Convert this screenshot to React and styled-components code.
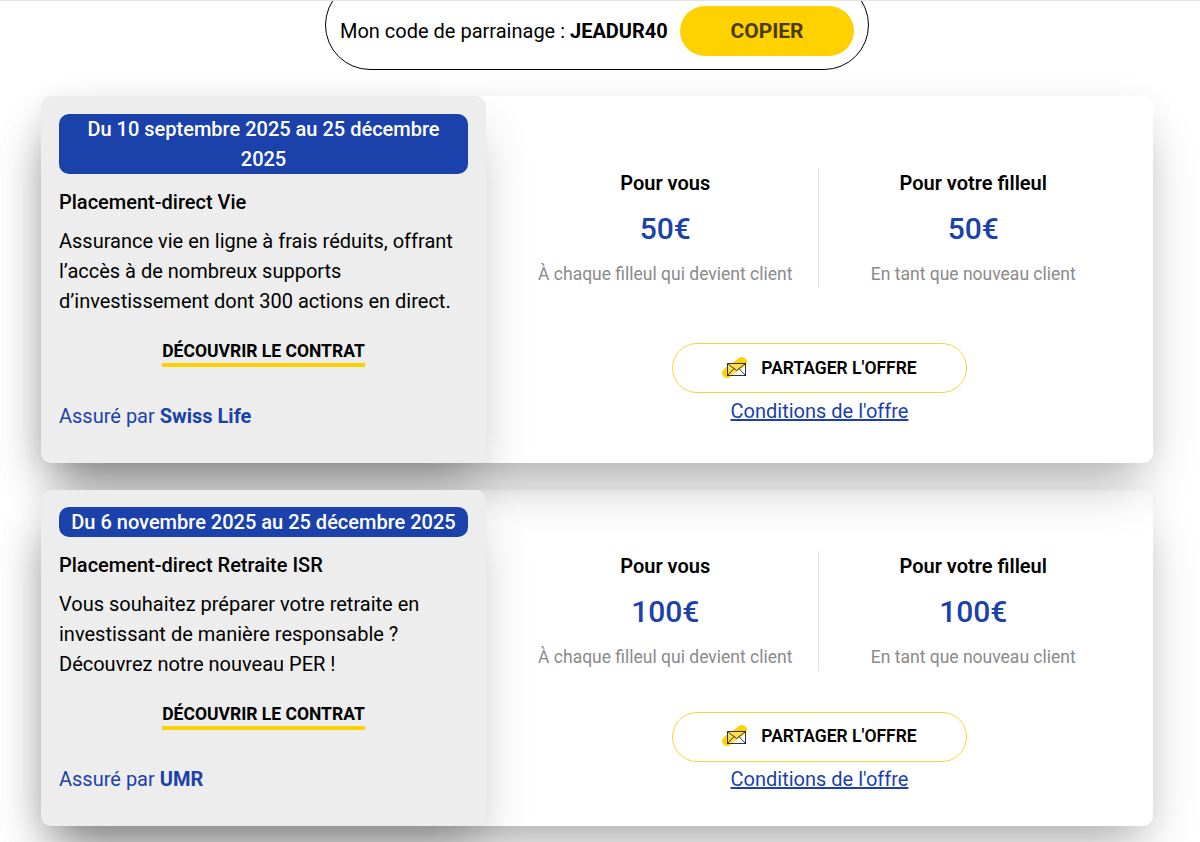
import React from 'react'
import styled, { createGlobalStyle } from 'styled-components'

const GlobalStyle = createGlobalStyle`
  html, body { margin: 0; padding: 0; background: #fff; }
  body { font-family: Roboto, "Liberation Sans", sans-serif; color: #000; overflow: hidden; }
`

const offers = [
  {
    dates: 'Du 10 septembre 2025 au 25 décembre 2025',
    name: 'Placement-direct Vie',
    text: 'Assurance vie en ligne à frais réduits, offrant l’accès à de nombreux supports d’investissement dont 300 actions en direct.',
    insurer: 'Swiss Life',
    amount: '50€',
    pad: 18,
    top: 72,
    gap: 55,
    lift: 0,
  },
  {
    dates: 'Du 6 novembre 2025 au 25 décembre 2025',
    name: 'Placement-direct Retraite ISR',
    text: 'Vous souhaitez préparer votre retraite en investissant de manière responsable ? Découvrez notre nouveau PER !',
    insurer: 'UMR',
    amount: '100€',
    pad: 17,
    top: 60.5,
    gap: 41.5,
    lift: 1,
  },
]

function MailIcon() {
  return (
    <svg width="30" height="28" viewBox="0 0 30 28">
      <path d="M5 19 L20 8" stroke="#ffd100" strokeWidth="10" strokeLinecap="round" />
      <rect x="5.5" y="9.5" width="18" height="12" fill="#fff" fillOpacity="0.3" stroke="#333" />
      <path d="M6 10 L14.5 16.5 L23 10 M6 21 L12 14.5 M23 21 L17 14.5" fill="none" stroke="#333" />
    </svg>
  )
}

function App() {
  return (
    <>
      <GlobalStyle />
      <Page>
        <CodeBar>
          <CodeLabel>Mon code de parrainage : <strong>JEADUR40</strong></CodeLabel>
          <CopyButton>COPIER</CopyButton>
        </CodeBar>
        <Offers>
          {offers.map((offer) => (
            <Card key={offer.name}>
              <Contract $pad={offer.pad}>
                <Dates>{offer.dates}</Dates>
                <ContractName>{offer.name}</ContractName>
                <ContractText>{offer.text}</ContractText>
                <ContractLinkRow>
                  <ContractLink>DÉCOUVRIR LE CONTRAT</ContractLink>
                </ContractLinkRow>
                <Insurer>Assuré par <strong>{offer.insurer}</strong></Insurer>
              </Contract>
              <Rewards $top={offer.top}>
                <Stats>
                  <Stat>
                    <StatTitle>Pour vous</StatTitle>
                    <Amount>{offer.amount}</Amount>
                    <StatText>À chaque filleul qui devient client</StatText>
                  </Stat>
                  <Stat>
                    <StatTitle>Pour votre filleul</StatTitle>
                    <Amount>{offer.amount}</Amount>
                    <StatText>En tant que nouveau client</StatText>
                  </Stat>
                </Stats>
                <ShareButton $gap={offer.gap} $lift={offer.lift}>
                  <MailIcon />
                  PARTAGER L'OFFRE
                </ShareButton>
                <Conditions $lift={offer.lift}>Conditions de l'offre</Conditions>
              </Rewards>
            </Card>
          ))}
        </Offers>
      </Page>
    </>
  )
}

export default App

const Page = styled.div`
  height: 842px;
  overflow: hidden;
  border-top: 1px solid #e4e4e4;
  box-sizing: border-box;
`
const CodeBar = styled.div`
  box-sizing: border-box;
  width: 544px;
  height: 90px;
  margin: -21px 0 0 325px;
  padding: 0 14px 13px 14px;
  display: flex;
  align-items: flex-end;
  justify-content: space-between;
  border: 1px solid #000;
  border-radius: 50px;
  background: #fff;
`
const CodeLabel = styled.div`
  font-size: 20px;
  line-height: 50px;
  strong { font-weight: 700; }
`
const CopyButton = styled.button`
  width: 174px;
  height: 50px;
  border: none;
  border-radius: 25px;
  background: #ffd100;
  color: #4a3b00;
  font-family: inherit;
  font-size: 21px;
  font-weight: 700;
`
const Offers = styled.div`
  margin: 26px 47px 0 41px;
  display: flex;
  flex-direction: column;
  gap: 27px;
`
const Card = styled.section`
  display: flex;
  border-radius: 10px;
  box-shadow: 0 28px 50px -12px rgba(0, 0, 0, 0.32), 0 0 30px rgba(0, 0, 0, 0.04);
`
const Contract = styled.div`
  position: relative;
  box-sizing: border-box;
  width: 445px;
  flex-shrink: 0;
  padding: ${(p) => p.$pad}px 18px 32px;
  background: #ededed;
  border-radius: 10px;
  box-shadow: 0 28px 50px -12px rgba(0, 0, 0, 0.3);
`
const Dates = styled.div`
  padding: 0 10px;
  background: #1b41ab;
  border-radius: 10px;
  color: #fff;
  font-size: 20px;
  font-weight: 500;
  line-height: 30px;
  text-align: center;
`
const ContractName = styled.h3`
  margin: 13px 0 0;
  font-size: 20px;
  font-weight: 500;
  line-height: 30px;
`
const ContractText = styled.p`
  margin: 9px 0 0;
  font-size: 20px;
  line-height: 30px;
`
const ContractLinkRow = styled.div`
  margin-top: 23px;
  text-align: center;
`
const ContractLink = styled.a`
  display: inline-block;
  font-size: 17.5px;
  font-weight: 700;
  line-height: 24px;
  border-bottom: 4px solid #ffd100;
`
const Insurer = styled.div`
  margin-top: 34px;
  color: #1b41ab;
  font-size: 20px;
  line-height: 30px;
  strong { font-weight: 700; }
`
const Rewards = styled.div`
  flex: 1;
  padding: ${(p) => p.$top}px 26px 0;
  display: flex;
  flex-direction: column;
  align-items: center;
`
const Stats = styled.div`
  align-self: stretch;
  margin: 0 1px 0 -1px;
  display: grid;
  grid-template-columns: 1fr 1fr;
`
const Stat = styled.div`
  height: 120px;
  padding-left: 2px;
  text-align: center;
  &:first-child { border-right: 1px solid #e2e2e2; }
`
const StatTitle = styled.div`
  font-size: 20px;
  font-weight: 600;
  line-height: 30px;
`
const Amount = styled.div`
  margin-top: 14px;
  color: #1b41ab;
  font-size: 30px;
  font-weight: 500;
  line-height: 34px;
`
const StatText = styled.div`
  margin-top: 13px;
  color: #8a8a8a;
  font-size: 17.5px;
  line-height: 30px;
`
const ShareButton = styled.button`
  box-sizing: border-box;
  width: 295px;
  height: 50px;
  margin-top: ${(p) => p.$gap}px;
  padding: 0 0 ${(p) => p.$lift * 2}px;
  display: flex;
  align-items: center;
  justify-content: center;
  gap: 9px;
  background: #fff;
  border: 1px solid #f8d53a;
  border-radius: 25px;
  color: #000;
  font-family: inherit;
  font-size: 17.5px;
  font-weight: 600;
`
const Conditions = styled.a`
  margin-top: ${(p) => 3 - p.$lift}px;
  color: #1b41ab;
  font-size: 20px;
  line-height: 30px;
  text-decoration: underline;
`
